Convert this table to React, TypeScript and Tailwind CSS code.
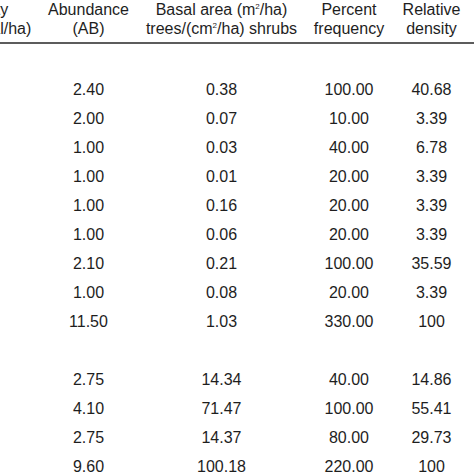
const cols = 'grid grid-cols-[120px_94px_172px_83px_82px]';

type Row = [string, string, string, string, string];

const rows: Row[] = [
  ['', '', '', '', ''],
  ['', '2.40', '0.38', '100.00', '40.68'],
  ['', '2.00', '0.07', '10.00', '3.39'],
  ['', '1.00', '0.03', '40.00', '6.78'],
  ['', '1.00', '0.01', '20.00', '3.39'],
  ['', '1.00', '0.16', '20.00', '3.39'],
  ['', '1.00', '0.06', '20.00', '3.39'],
  ['', '2.10', '0.21', '100.00', '35.59'],
  ['', '1.00', '0.08', '20.00', '3.39'],
  ['', '11.50', '1.03', '330.00', '100'],
  ['', '', '', '', ''],
  ['', '2.75', '14.34', '40.00', '14.86'],
  ['', '4.10', '71.47', '100.00', '55.41'],
  ['', '2.75', '14.37', '80.00', '29.73'],
  ['', '9.60', '100.18', '220.00', '100'],
];

function Sq() {
  return <span className="relative -top-[6px] text-[8px] leading-none">2</span>;
}

export default function App() {
  return (
    <div className="w-[474px] h-[474px] overflow-hidden bg-white text-[#1e1e1e] text-[16px] font-['Liberation_Sans',Arial,sans-serif]">
      <div className="w-[600px] -ml-[78.5px]">
        <div className={`${cols} pt-[1px] pb-[4px] border-b-2 border-[#5c5c5c] leading-[18.5px] text-center whitespace-nowrap`}>
          <div>
            <div>Density</div>
            <div>(individual/ha)</div>
          </div>
          <div>
            <div>Abundance</div>
            <div>(AB)</div>
          </div>
          <div>
            <div>
              Basal area (m<Sq />/ha)
            </div>
            <div>
              trees/(cm<Sq />/ha) shrubs
            </div>
          </div>
          <div>
            <div>Percent</div>
            <div>frequency</div>
          </div>
          <div>
            <div>Relative</div>
            <div>density</div>
          </div>
        </div>
        <div className="pt-[2px]">
          {rows.map((r, i) => (
            <div key={i} className={`${cols} h-[29px] leading-[29px] text-center whitespace-nowrap`}>
              {r.map((c, j) => (
                <div key={j}>{c}</div>
              ))}
            </div>
          ))}
        </div>
      </div>
    </div>
  );
}
